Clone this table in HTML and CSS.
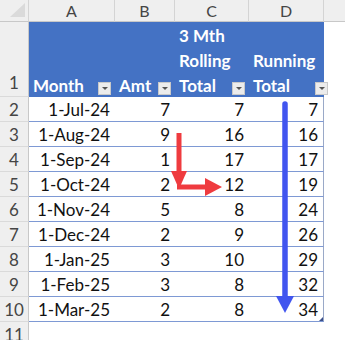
FILE: index.html
```html
<!DOCTYPE html>
<html>
<head>
<meta charset="utf-8">
<link rel="stylesheet" href="styles.css">
</head>
<body>
<div class="sheet">
  <div class="corner"><span class="corner-tri"></span></div>
  <div class="colhead">A</div>
  <div class="colhead">B</div>
  <div class="colhead">C</div>
  <div class="colhead">D</div>
  <div class="colhead blank"></div>

  <div class="rowhead rh1">1</div>
  <div class="th"><span class="th-text">Month</span><span class="btn"></span></div>
  <div class="th"><span class="th-text">Amt</span><span class="btn"></span></div>
  <div class="th"><span class="th-text">3 Mth<br>Rolling<br>Total</span><span class="btn"></span></div>
  <div class="th"><span class="th-text">Running<br>Total</span><span class="btn"></span></div>
  <div class="blankcell"></div>

  <div class="rowhead">2</div><div class="td">1-Jul-24</div><div class="td">7</div><div class="td">7</div><div class="td">7</div><div class="blankcell"></div>
  <div class="rowhead">3</div><div class="td">1-Aug-24</div><div class="td">9</div><div class="td">16</div><div class="td">16</div><div class="blankcell"></div>
  <div class="rowhead">4</div><div class="td">1-Sep-24</div><div class="td">1</div><div class="td">17</div><div class="td">17</div><div class="blankcell"></div>
  <div class="rowhead">5</div><div class="td">1-Oct-24</div><div class="td">2</div><div class="td">12</div><div class="td">19</div><div class="blankcell"></div>
  <div class="rowhead">6</div><div class="td">1-Nov-24</div><div class="td">5</div><div class="td">8</div><div class="td">24</div><div class="blankcell"></div>
  <div class="rowhead">7</div><div class="td">1-Dec-24</div><div class="td">2</div><div class="td">9</div><div class="td">26</div><div class="blankcell"></div>
  <div class="rowhead">8</div><div class="td">1-Jan-25</div><div class="td">3</div><div class="td">10</div><div class="td">29</div><div class="blankcell"></div>
  <div class="rowhead">9</div><div class="td">1-Feb-25</div><div class="td">3</div><div class="td">8</div><div class="td">32</div><div class="blankcell"></div>
  <div class="rowhead">10</div><div class="td">1-Mar-25</div><div class="td">2</div><div class="td">8</div><div class="td last"><span class="handle"></span>34</div><div class="blankcell"></div>
  <div class="rowhead">11</div><div class="cell"></div><div class="cell"></div><div class="cell"></div><div class="cell"></div><div class="blankcell"></div>
</div>

<svg class="arrows" width="345" height="340" viewBox="0 0 345 340">
  <g fill="#ef3b3f" stroke="none">
    <path d="M176.5 133 H181.5 V172 H176.5 Z"/>
    <polygon points="171,171 187,171 179,189"/>
    <path d="M177 184.5 H207 V189.5 H177 Z"/>
    <polygon points="205,178 222,187 205,196"/>
  </g>
  <g fill="#4155ef">
    <line x1="285" y1="104" x2="285" y2="297" stroke="#4155ef" stroke-width="5.5" stroke-linecap="round"/>
    <polygon points="276,296 294,296 285,313"/>
  </g>
</svg>
</body>
</html>
```

FILE: styles.css
```css
html, body {
  margin: 0;
  padding: 0;
  background: #ffffff;
  overflow: hidden;
}

body {
  width: 345px;
  height: 340px;
  position: relative;
  font-family: Lato, "Open Sans", "Liberation Sans", sans-serif;
}

.sheet {
  display: grid;
  grid-template-columns: 29px 86px 60px 74px 75px 21px;
  grid-template-rows: 22px 75px repeat(10, 25px);
  width: 345px;
}

.corner {
  background: #efefef;
  border-right: 1px solid #d4d4d4;
  border-bottom: 1px solid #c8c8c8;
  box-sizing: border-box;
  position: relative;
}

.corner-tri {
  position: absolute;
  right: 3px;
  bottom: 4px;
  width: 0;
  height: 0;
  border-left: 15px solid transparent;
  border-bottom: 14px solid #dadada;
}

.colhead {
  background: #efefef;
  color: #454545;
  font-size: 16px;
  line-height: 21px;
  text-align: center;
  border-right: 1px solid #d4d4d4;
  border-bottom: 1px solid #c8c8c8;
  box-sizing: border-box;
}

.colhead.blank {
  border-right: none;
}

.rowhead {
  background: #efefef;
  color: #454545;
  font-size: 17px;
  text-align: center;
  border-right: 1px solid #c8c8c8;
  border-bottom: 1px solid #dadada;
  box-sizing: border-box;
  padding-top: 2px;
  line-height: 22px;
}

.rowhead.rh1 {
  display: flex;
  align-items: flex-end;
  justify-content: center;
  padding-bottom: 2px;
}

.th {
  background: #4472c4;
  color: #ffffff;
  font-weight: 700;
  font-size: 17px;
  display: flex;
  align-items: flex-end;
  justify-content: space-between;
  padding-left: 4px;
  box-sizing: border-box;
}

.th-text {
  line-height: 25px;
  padding-bottom: 0;
  position: relative;
  top: 1px;
}

.btn {
  flex: none;
  width: 13px;
  height: 13px;
  margin: 0 4px 2px 0;
  background: #ececec;
  border: 1px solid #c9c9c9;
  box-sizing: border-box;
  position: relative;
}

.btn::after {
  content: "";
  position: absolute;
  left: 3px;
  top: 4px;
  width: 0;
  height: 0;
  border-left: 3px solid transparent;
  border-right: 3px solid transparent;
  border-top: 3px solid #555555;
}

.td {
  font-size: 17px;
  color: #111111;
  text-align: right;
  padding: 2px 5px 0 0;
  line-height: 22px;
  border-bottom: 1px solid #7e99d4;
  box-sizing: border-box;
  background: #ffffff;
  position: relative;
}

.td.last .handle {
  position: absolute;
  right: 0;
  bottom: 0;
  width: 0;
  height: 0;
  border-left: 4px solid transparent;
  border-bottom: 4px solid #3b4f8a;
}

.sheet > .td:nth-child(6n+5) {
  border-right: 1px solid #9aa9c8;
}

.cell {
  background: #ffffff;
}

.blankcell {
  background: #ffffff;
}

.arrows {
  position: absolute;
  left: 0;
  top: 0;
  pointer-events: none;
}
```
